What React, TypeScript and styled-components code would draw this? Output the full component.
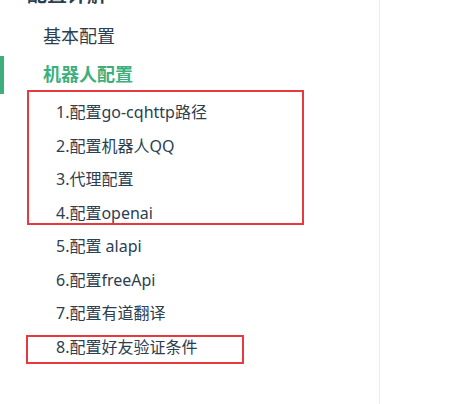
import { FC } from "react";
import styled, { createGlobalStyle } from "styled-components";

const GlobalStyle = createGlobalStyle`
  html, body {
    margin: 0;
    padding: 0;
    background: #fff;
  }
  body {
    font-family: "Noto Sans", "Noto Sans CJK SC", sans-serif;
    color: #2c3e50;
    -webkit-font-smoothing: antialiased;
  }
`;

const Page = styled.div`
  position: relative;
  width: 474px;
  height: 404px;
  overflow: hidden;
`;

const Sidebar = styled.aside`
  width: 380px;
  height: 404px;
  box-sizing: border-box;
  border-right: 1px solid #eaecef;
  display: flex;
  flex-direction: column;
`;

const Heading = styled.h2`
  margin: -17px 0 11px;
  padding-left: 27px;
  font-size: 20px;
  line-height: 24px;
  font-weight: 700;
  color: #2c3e50;
`;

const GroupTitle = styled.a<{ $active?: boolean }>`
  display: block;
  box-sizing: border-box;
  height: 38px;
  line-height: 37px;
  padding-left: 39px;
  font-size: 18px;
  text-decoration: none;
  border-left: 4px solid ${(p) => (p.$active ? "#3eaf7c" : "transparent")};
  color: ${(p) => (p.$active ? "#3eaf7c" : "#2c3e50")};
  font-weight: ${(p) => (p.$active ? 700 : 400)};
`;

const SubList = styled.ul`
  list-style: none;
  margin: 0;
  padding: 2px 0 0;
`;

const SubLink = styled.li`
  height: 33.5px;
  line-height: 33.5px;
  padding-left: 56px;
  font-size: 16px;
  color: #2c3e50;
  white-space: nowrap;
`;

const Annotation = styled.div<{ $x: number; $y: number; $w: number; $h: number }>`
  position: absolute;
  left: ${(p) => p.$x}px;
  top: ${(p) => p.$y}px;
  width: ${(p) => p.$w}px;
  height: ${(p) => p.$h}px;
  box-sizing: border-box;
  border: 2px solid #e8393f;
  pointer-events: none;
`;

const subItems = [
  "1.配置go-cqhttp路径",
  "2.配置机器人QQ",
  "3.代理配置",
  "4.配置openai",
  "5.配置 alapi",
  "6.配置freeApi",
  "7.配置有道翻译",
  "8.配置好友验证条件",
];

const App: FC = () => {
  return (
    <Page>
      <GlobalStyle />
      <Sidebar>
        <Heading>配置详解</Heading>
        <GroupTitle>基本配置</GroupTitle>
        <GroupTitle $active>机器人配置</GroupTitle>
        <SubList>
          {subItems.map((t) => (
            <SubLink key={t}>{t}</SubLink>
          ))}
        </SubList>
      </Sidebar>
      <Annotation $x={27} $y={90} $w={277} $h={135} />
      <Annotation $x={26} $y={335} $w={218} $h={29} />
    </Page>
  );
};

export default App;
